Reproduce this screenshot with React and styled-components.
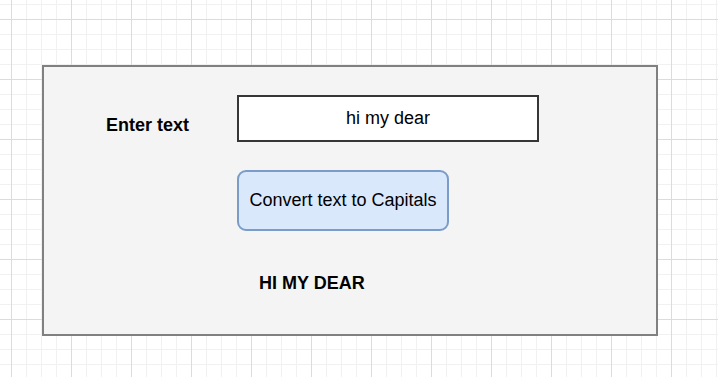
import React, { useState } from 'react';
import styled, { createGlobalStyle } from 'styled-components';

const GlobalStyle = createGlobalStyle`
  html, body {
    margin: 0;
    height: 100%;
  }
  body {
    font-family: "Liberation Sans", Arial, Helvetica, sans-serif;
    background-color: #ffffff;
    background-image:
      linear-gradient(to right, #dcdcdc 1px, transparent 1px),
      linear-gradient(to bottom, #dcdcdc 1px, transparent 1px),
      linear-gradient(to right, #f1f1f1 1px, transparent 1px),
      linear-gradient(to bottom, #f1f1f1 1px, transparent 1px);
    background-size: 60px 60px, 60px 60px, 15px 15px, 15px 15px;
    background-position: 11px 19px, 11px 19px, 11px 19px, 11px 19px;
  }
`;

const Canvas = styled.div`
  padding: 65px 0 0 42px;
`;

const Panel = styled.div`
  box-sizing: border-box;
  width: 616px;
  height: 271px;
  border: 2px solid #808080;
  background: #f4f4f4;
  padding-top: 28px;
  display: grid;
  grid-template-columns: 193px 1fr;
  align-content: start;
`;

const Label = styled.div`
  align-self: start;
  padding: 20px 0 0 62px;
  font-size: 18px;
  line-height: 20px;
  font-weight: bold;
  color: #000;
`;

const TextBox = styled.input`
  box-sizing: border-box;
  width: 302px;
  height: 47px;
  border: 2px solid #363636;
  background: #fff;
  padding: 0;
  margin: 0;
  font-family: inherit;
  font-size: 18px;
  line-height: 20px;
  color: #000;
  text-align: center;
  outline: none;
`;

const ConvertButton = styled.button`
  grid-column: 2;
  box-sizing: border-box;
  width: 212px;
  height: 61px;
  margin-top: 28px;
  border: 2px solid #7b9bc9;
  border-radius: 9px;
  background: #dae8fc;
  font-family: inherit;
  font-size: 18px;
  line-height: 20px;
  color: #000;
  padding: 0 0 2px;
  cursor: pointer;
`;

const Output = styled.div`
  grid-column: 2;
  margin-top: 42px;
  padding-left: 22px;
  font-size: 18px;
  line-height: 20px;
  font-weight: bold;
  color: #000;
`;

const App = () => {
  const [text, setText] = useState('hi my dear');
  const [result, setResult] = useState('HI MY DEAR');

  return (
    <Canvas>
      <GlobalStyle />
      <Panel>
        <Label>Enter text</Label>
        <TextBox value={text} onChange={(e) => setText(e.target.value)} />
        <ConvertButton onClick={() => setResult(text.toUpperCase())}>
          Convert text to Capitals
        </ConvertButton>
        <Output>{result}</Output>
      </Panel>
    </Canvas>
  );
};

export default App;
